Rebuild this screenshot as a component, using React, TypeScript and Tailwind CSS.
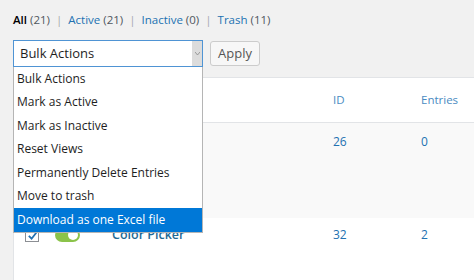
import React from "react";

const font = { fontFamily: "'Open Sans', 'Noto Sans', sans-serif" };

const options = [
  "Bulk Actions",
  "Mark as Active",
  "Mark as Inactive",
  "Reset Views",
  "Permanently Delete Entries",
  "Move to trash",
  "Download as one Excel file",
];

function Views() {
  return (
    <div className="flex items-center h-[20px] text-[11.5px] text-[#50575e] gap-[6px]">
      <span><b className="text-black font-semibold">All</b> (21)</span>
      <span className="text-[#a7aaad]">|</span>
      <span><span className="text-[#2271b1]">Active</span> (21)</span>
      <span className="text-[#a7aaad]">|</span>
      <span><span className="text-[#2271b1]">Inactive</span> (0)</span>
      <span className="text-[#a7aaad]">|</span>
      <span><span className="text-[#2271b1]">Trash</span> (11)</span>
    </div>
  );
}

function BulkSelect() {
  return (
    <div className="relative w-[190px]">
      <div className="h-[27px] flex items-stretch border border-[#4f94d4] bg-white">
        <span className="flex-1 flex items-center pl-[6px] text-[13px] text-[#1e1e1e]">Bulk Actions</span>
        <span className="w-[10px] bg-[#dcdcdc] flex items-center justify-center">
          <svg width="5" height="3" viewBox="0 0 5 3"><path d="M0 0 L2.5 3 L5 0" fill="none" stroke="#888" strokeWidth="0.8" /></svg>
        </span>
      </div>
      <ul className="absolute left-0 top-[27px] w-[190px] bg-white border border-[#b5b5b5] border-t-0 z-10">
        {options.map((o, i) => (
          <li
            key={o}
            className={
              "h-[23.5px] flex items-center pl-[3px] text-[12px] " +
              (i === options.length - 1 ? "bg-[#0078d7] text-white" : "text-[#1e1e1e]")
            }
          >
            {o}
          </li>
        ))}
      </ul>
    </div>
  );
}

function Toggle() {
  return (
    <span className="relative inline-block w-[25px] h-[14px] rounded-full bg-[#8bc34a]">
      <span className="absolute right-[2px] top-[2px] w-[10px] h-[10px] rounded-full bg-white" />
    </span>
  );
}

export default function App() {
  return (
    <div className="w-[474px] h-[280px] overflow-hidden bg-[#f1f1f1] pl-[13px] pt-[10px]" style={font}>
      <Views />
      <div className="flex items-center gap-[7px] mt-[10px] h-[27px]">
        <BulkSelect />
        <button className="h-[25px] w-[50px] border border-[#ccc] rounded-[3px] bg-[#f7f7f7] text-[13px] text-[#555]">
          Apply
        </button>
      </div>
      <div className="mt-[10px] w-[600px] bg-white border-l border-t border-[#e2e4e7]">
        <div className="grid grid-cols-[309px_88px_1fr] h-[45px] items-center border-b border-[#e2e4e7] text-[11.5px] text-[#4a8bc2]">
          <div />
          <div className="pl-[10px]">ID</div>
          <div className="pl-[10px]">Entries</div>
        </div>
        <div className="grid grid-cols-[309px_88px_1fr] h-[95px] bg-[#f9f9f9] text-[12px] text-[#2271b1] pt-[10px]">
          <div />
          <div className="pl-[10px]">26</div>
          <div className="pl-[10px]">0</div>
        </div>
        <div className="grid grid-cols-[309px_88px_1fr] h-[70px] text-[12px] text-[#2271b1] pt-[9px]">
          <div className="flex items-center h-[16px] pl-[11px]">
            <span className="w-[14px] h-[14px] border border-[#8c8f94] bg-white flex items-center justify-center">
              <svg width="11" height="11" viewBox="0 0 12 12"><path d="M2 6.5 L5 9.5 L10.5 2.5" fill="none" stroke="#2271b1" strokeWidth="2" /></svg>
            </span>
            <span className="ml-[16px] flex"><Toggle /></span>
            <span className="ml-[32px] font-semibold text-[12.5px] text-[#1f6a94]">Color Picker</span>
          </div>
          <div className="pl-[10px] h-[16px] flex items-center">32</div>
          <div className="pl-[10px] h-[16px] flex items-center">2</div>
        </div>
      </div>
    </div>
  );
}
